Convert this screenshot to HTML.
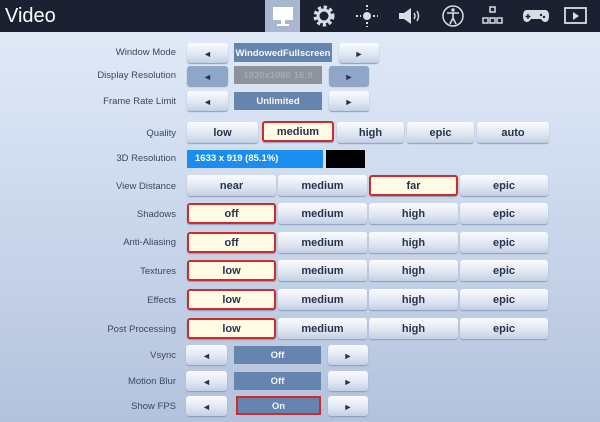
<!DOCTYPE html>
<html><head><style>
*{margin:0;padding:0;box-sizing:border-box}
body{width:600px;height:422px;overflow:hidden;font-family:"Liberation Sans",sans-serif;background:linear-gradient(#e3ecf8 0%,#d0dcef 40%,#b3c2dc 100%);position:relative}
#hdr{position:absolute;left:0;top:0;width:600px;height:32px;background:#1b2131}
#hdr .t{position:absolute;left:5px;top:5px;color:#fff;font-size:20px;line-height:22px}
#sel{position:absolute;left:265px;top:0;width:35px;height:32px;background:#a9b6cf}
.ic{position:absolute;top:4px}
.l{position:absolute;right:424px;font-size:9.5px;color:#3b4660;text-align:right;white-space:nowrap}
.b{position:absolute;height:21px;border-radius:3px;background:linear-gradient(#fbfcfe,#dde5f1 60%,#c3cfe3);box-shadow:0 1px 1px #8a9bbb;font-size:11px;font-weight:bold;color:#27334d;display:flex;align-items:center;justify-content:center;padding-top:1px}
.s{background:#fffbe5;border:2px solid #d2292b}
.v{position:absolute;background:#6584ae;color:#f4f7fb;font-size:9.5px;font-weight:bold;display:flex;align-items:center;justify-content:center;padding-top:1px}
.a{font-size:9px}
</style></head><body>
<div id="hdr"><div class="t">Video</div>
<div id="sel"></div>
<svg class="ic" style="left:270px" width="26" height="24"><rect x="3" y="3" width="20" height="13" fill="#fff"/><rect x="11" y="16" width="4" height="4" fill="#fff"/><rect x="7" y="20" width="12" height="2" fill="#fff"/></svg>
<svg class="ic" style="left:311px" width="26" height="24"><circle cx="13" cy="12" r="8" fill="none" stroke="#d8dce4" stroke-width="5" stroke-dasharray="3 2.3"/><circle cx="13" cy="12" r="6" fill="none" stroke="#d8dce4" stroke-width="3"/></svg>
<svg class="ic" style="left:354px" width="26" height="24"><circle cx="13" cy="12" r="4" fill="#d8dce4"/><g stroke="#d8dce4" stroke-width="2" stroke-dasharray="2 2"><line x1="13" y1="1" x2="13" y2="6"/><line x1="13" y1="18" x2="13" y2="23"/><line x1="2" y1="12" x2="7" y2="12"/><line x1="19" y1="12" x2="24" y2="12"/></g></svg>
<svg class="ic" style="left:396px" width="28" height="24"><path d="M3 9h5l7-5v16l-7-5H3z" fill="#d8dce4"/><path d="M18 9q2 3 0 6M21 7q3 5 0 10" stroke="#d8dce4" fill="none" stroke-width="1.5"/></svg>
<svg class="ic" style="left:440px" width="26" height="24"><circle cx="13" cy="12" r="10" fill="none" stroke="#d8dce4" stroke-width="1.5"/><circle cx="13" cy="6" r="1.7" fill="#d8dce4"/><path d="M7 9h12M13 9v5l-3 6M13 14l3 6" stroke="#d8dce4" stroke-width="1.6" fill="none"/></svg>
<svg class="ic" style="left:480px" width="26" height="24"><g fill="none" stroke="#d8dce4" stroke-width="1.5"><rect x="10" y="3" width="5" height="5"/><rect x="3" y="14" width="5" height="5"/><rect x="10" y="14" width="5" height="5"/><rect x="17" y="14" width="5" height="5"/></g></svg>
<svg class="ic" style="left:522px" width="28" height="24"><path d="M5 6h18q4 0 4 6 0 6-4 6-2 0-4-3H9q-2 3-4 3-4 0-4-6 0-6 4-6z" fill="#d8dce4"/><path d="M6 10v5M3.5 12.5h5" stroke="#1b2131" stroke-width="1.5"/><circle cx="19" cy="11" r="1.2" fill="#1b2131"/><circle cx="22" cy="13" r="1.2" fill="#1b2131"/></svg>
<svg class="ic" style="left:563px" width="26" height="24"><rect x="2" y="4" width="21" height="15" fill="none" stroke="#d8dce4" stroke-width="1.8"/><path d="M10 8l6 4-6 4z" fill="#d8dce4"/></svg>
</div>

<div class="l" style="top:47px">Window Mode</div>
<div class="b a" style="left:187px;top:43px;width:41px;height:20px">◄</div>
<div class="v" style="left:234px;top:43px;width:98px;height:19px">WindowedFullscreen</div>
<div class="b a" style="left:339px;top:43px;width:40px;height:20px">►</div>

<div class="l" style="top:70px">Display Resolution</div>
<div class="b a" style="left:187px;top:66px;width:41px;height:20px;background:#8ea6c8">◄</div>
<div class="v" style="left:234px;top:66px;width:88px;height:18px;background:#8e929b;color:#a6aab2">1920x1080 16:9</div>
<div class="b a" style="left:329px;top:66px;width:40px;height:20px;background:#8ea6c8">►</div>

<div class="l" style="top:96px">Frame Rate Limit</div>
<div class="b a" style="left:187px;top:91px;width:41px;height:20px">◄</div>
<div class="v" style="left:234px;top:92px;width:88px;height:18px">Unlimited</div>
<div class="b a" style="left:329px;top:91px;width:40px;height:20px">►</div>

<div class="l" style="top:128px">Quality</div>
<div class="b" style="left:187px;top:122px;width:71px">low</div>
<div class="b s" style="left:262px;top:121px;width:72px">medium</div>
<div class="b" style="left:337px;top:122px;width:67px">high</div>
<div class="b" style="left:407px;top:122px;width:67px">epic</div>
<div class="b" style="left:477px;top:122px;width:72px">auto</div>

<div class="l" style="top:153px">3D Resolution</div>
<div style="position:absolute;left:187px;top:150px;width:136px;height:18px;background:#1a8ef0;color:#fff;font-size:9.5px;font-weight:bold;line-height:18px;padding-left:8px">1633 x 919 (85.1%)</div>
<div style="position:absolute;left:326px;top:150px;width:39px;height:18px;background:#000"></div>

<div class="l" style="top:181px">View Distance</div>
<div class="b" style="left:187px;top:175px;width:89px">near</div>
<div class="b" style="left:278px;top:175px;width:89px">medium</div>
<div class="b s" style="left:369px;top:175px;width:89px">far</div>
<div class="b" style="left:460px;top:175px;width:88px">epic</div>

<div class="l" style="top:209px">Shadows</div>
<div class="b s" style="left:187px;top:203px;width:89px">off</div>
<div class="b" style="left:278px;top:203px;width:89px">medium</div>
<div class="b" style="left:369px;top:203px;width:89px">high</div>
<div class="b" style="left:460px;top:203px;width:88px">epic</div>

<div class="l" style="top:237px">Anti-Aliasing</div>
<div class="b s" style="left:187px;top:232px;width:89px">off</div>
<div class="b" style="left:278px;top:232px;width:89px">medium</div>
<div class="b" style="left:369px;top:232px;width:89px">high</div>
<div class="b" style="left:460px;top:232px;width:88px">epic</div>

<div class="l" style="top:266px">Textures</div>
<div class="b s" style="left:187px;top:260px;width:89px">low</div>
<div class="b" style="left:278px;top:260px;width:89px">medium</div>
<div class="b" style="left:369px;top:260px;width:89px">high</div>
<div class="b" style="left:460px;top:260px;width:88px">epic</div>

<div class="l" style="top:295px">Effects</div>
<div class="b s" style="left:187px;top:289px;width:89px">low</div>
<div class="b" style="left:278px;top:289px;width:89px">medium</div>
<div class="b" style="left:369px;top:289px;width:89px">high</div>
<div class="b" style="left:460px;top:289px;width:88px">epic</div>

<div class="l" style="top:324px">Post Processing</div>
<div class="b s" style="left:187px;top:318px;width:89px">low</div>
<div class="b" style="left:278px;top:318px;width:89px">medium</div>
<div class="b" style="left:369px;top:318px;width:89px">high</div>
<div class="b" style="left:460px;top:318px;width:88px">epic</div>

<div class="l" style="top:350px">Vsync</div>
<div class="b a" style="left:186px;top:345px;width:41px;height:20px">◄</div>
<div class="v" style="left:234px;top:346px;width:87px;height:18px">Off</div>
<div class="b a" style="left:328px;top:345px;width:40px;height:20px">►</div>

<div class="l" style="top:376px">Motion Blur</div>
<div class="b a" style="left:186px;top:371px;width:41px;height:20px">◄</div>
<div class="v" style="left:234px;top:372px;width:87px;height:18px">Off</div>
<div class="b a" style="left:328px;top:371px;width:40px;height:20px">►</div>

<div class="l" style="top:401px">Show FPS</div>
<div class="b a" style="left:186px;top:396px;width:41px;height:20px">◄</div>
<div class="v" style="left:236px;top:396px;width:85px;height:19px;border:2px solid #d2292b">On</div>
<div class="b a" style="left:328px;top:396px;width:40px;height:20px">►</div>
</body></html>
